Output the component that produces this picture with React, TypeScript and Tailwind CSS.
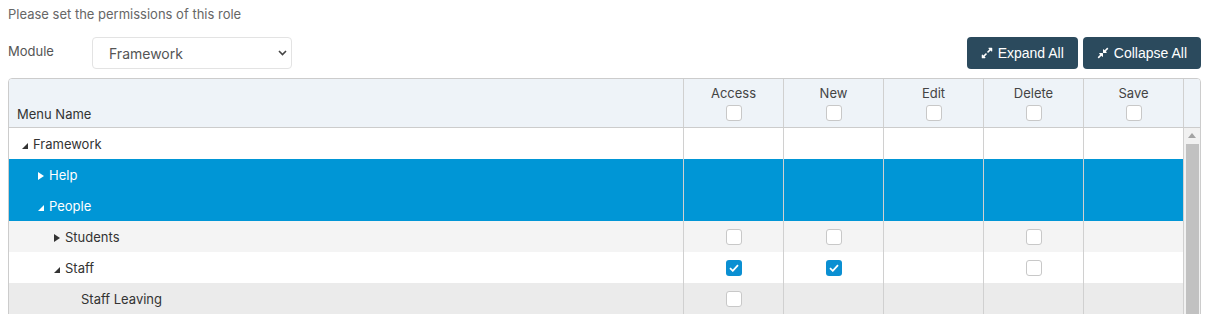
import { FaExpandAlt, FaCompressAlt } from "react-icons/fa";

type Row = {
  name: string;
  level: number;
  toggle: "open" | "closed" | null;
  bg: string;
  selected?: boolean;
  boxes: (null | boolean)[];
};

const rows: Row[] = [
  { name: "Framework", level: 0, toggle: "open", bg: "bg-white", boxes: [null, null, null, null, null] },
  { name: "Help", level: 1, toggle: "closed", bg: "bg-[#0096d6]", selected: true, boxes: [null, null, null, null, null] },
  { name: "People", level: 1, toggle: "open", bg: "bg-[#0096d6]", selected: true, boxes: [null, null, null, null, null] },
  { name: "Students", level: 2, toggle: "closed", bg: "bg-[#f4f4f4]", boxes: [false, false, null, false, null] },
  { name: "Staff", level: 2, toggle: "open", bg: "bg-white", boxes: [true, true, null, false, null] },
  { name: "Staff Leaving", level: 3, toggle: null, bg: "bg-[#ebebeb]", boxes: [false, null, null, null, null] },
];

const columns = ["Access", "New", "Edit", "Delete", "Save"];

function Checkbox({ checked }: { checked?: boolean }) {
  if (checked) {
    return (
      <span className="flex h-[16px] w-[16px] items-center justify-center rounded-[3px] bg-[#0a8fd2]">
        <svg width="10" height="8" viewBox="0 0 10 8">
          <path d="M1 4.2 L3.8 6.8 L9 1.2" fill="none" stroke="white" strokeWidth="1.8" />
        </svg>
      </span>
    );
  }
  return <span className="block h-[16px] w-[16px] rounded-[3px] border border-[#c8c8c8] bg-white" />;
}

function Toggle({ state, light }: { state: "open" | "closed"; light?: boolean }) {
  const fill = light ? "#ffffff" : "#333333";
  if (state === "open") {
    return (
      <svg width="6" height="6" viewBox="0 0 6 6" className="mt-[2px]">
        <polygon points="6,0 6,6 0,6" fill={fill} />
      </svg>
    );
  }
  return (
    <svg width="6" height="8" viewBox="0 0 6 8">
      <polygon points="0,0 6,4 0,8" fill={fill} />
    </svg>
  );
}

export default function App() {
  return (
    <div className="h-screen overflow-hidden bg-white px-2 font-['Inter',sans-serif] text-[13px] text-[#333]">
      <p className="pt-[5px] leading-[18px] text-[#666]">Please set the permissions of this role</p>

      <div className="mt-[14px] flex items-center">
        <label className="w-[84px] pb-[2px] text-[#555]">Module</label>
        <div className="flex h-[32px] w-[200px] items-center justify-between rounded-[4px] border border-[#e3e3e3] pl-4 pr-[4px] text-[14px] text-[#555]">
          <span>Framework</span>
          <svg width="9" height="6" viewBox="0 0 9 6">
            <path d="M1 1 L4.5 4.5 L8 1" fill="none" stroke="#444" strokeWidth="1.6" />
          </svg>
        </div>
        <div className="ml-auto flex gap-[5px] pr-[4px] font-['Liberation_Sans',Arial,sans-serif] text-[14px] text-white">
          <button className="flex h-[32px] items-center gap-[5px] rounded-[4px] bg-[#2b4a5d] px-[14px]">
            <FaExpandAlt className="h-[12px] w-[12px]" />
            Expand All
          </button>
          <button className="flex h-[32px] items-center gap-[5px] rounded-[4px] bg-[#2b4a5d] px-[14px]">
            <FaCompressAlt className="h-[12px] w-[12px]" />
            Collapse All
          </button>
        </div>
      </div>

      <div className="mt-[9px] w-[1193px] overflow-hidden rounded-t-[4px] border border-[#cccccc]">
        {/* header */}
        <div className="grid h-[49px] grid-cols-[674px_repeat(5,100px)_17px] border-b border-[#cccccc] bg-[#eef3f8]">
          <div className="flex items-end pb-[3px] pl-2 text-[#333]">Menu Name</div>
          {columns.map((c) => (
            <div key={c} className="flex flex-col items-center border-l border-[#d0d0d0] pt-[6px] text-[#444]">
              <span className="leading-[16px]">{c}</span>
              <span className="mt-[4px]">
                <Checkbox />
              </span>
            </div>
          ))}
          <div className="border-l border-[#d0d0d0]" />
        </div>

        {/* body */}
        <div className="flex">
          <div className="w-[1174px]">
            {rows.map((r) => (
              <div key={r.name} className={`grid h-[31px] grid-cols-[674px_repeat(5,100px)] ${r.bg}`}>
                <div
                  className={`flex items-center gap-[5px] pt-[2px] ${r.selected ? "text-white" : "text-[#333]"}`}
                  style={{ paddingLeft: 13 + r.level * 16 }}
                >
                  {r.toggle ? <Toggle state={r.toggle} light={r.selected} /> : <span className="w-[6px]" />}
                  <span>{r.name}</span>
                </div>
                {r.boxes.map((b, i) => (
                  <div key={i} className="flex items-center justify-center border-l border-[#d0d0d0]">
                    {b !== null && <Checkbox checked={b} />}
                  </div>
                ))}
              </div>
            ))}
          </div>
          <div className="flex w-[17px] flex-col items-center border-l border-[#d0d0d0] bg-[#f1f1f1]">
            <svg width="8" height="5" viewBox="0 0 8 5" className="mt-[5px]">
              <polygon points="4,0 8,5 0,5" fill="#a3a3a3" />
            </svg>
            <div className="mt-[6px] h-[400px] w-[13px] bg-[#c1c1c1]" />
          </div>
        </div>
      </div>
    </div>
  );
}
